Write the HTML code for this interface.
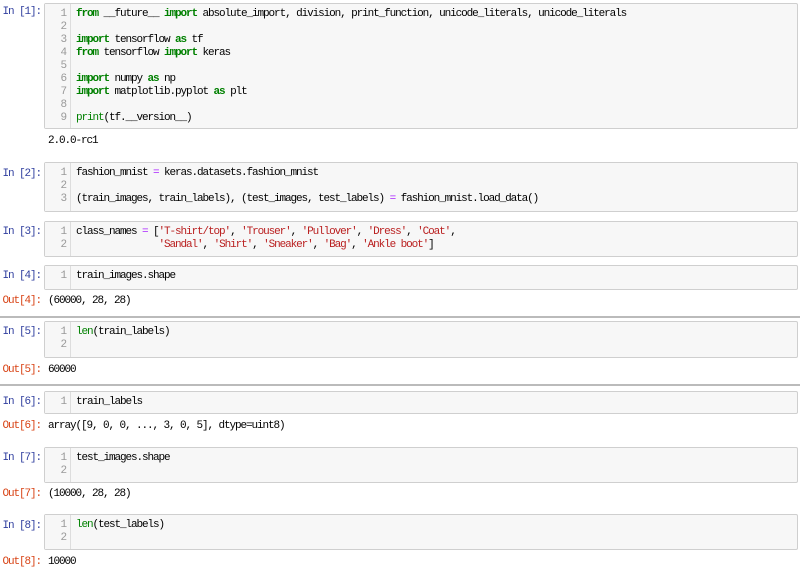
<!DOCTYPE html>
<html><head><meta charset="utf-8"><style>
body{margin:0;width:800px;height:570px;background:#fff;position:relative;overflow:hidden;font-family:"Liberation Mono","DejaVu Sans Mono",monospace;font-size:11px;letter-spacing:-1.1px;color:#000}
.p{position:absolute;left:0;width:41px;text-align:right;line-height:13px;white-space:pre}
.in{color:#303f9f}.out{color:#d84315}
.box{position:absolute;left:44px;width:752px;background:#f7f7f7;border:1px solid #cfcfcf;border-radius:2px}
.g{position:absolute;left:0;top:0;bottom:0;width:25px;border-right:1px solid #ddd;background:#f7f7f7}
.ln{position:absolute;left:0;width:21px;text-align:right;color:#999;line-height:13px;top:4px;white-space:pre}
.code{position:absolute;left:31px;top:4px;line-height:13px;white-space:pre}
.o{position:absolute;left:48px;line-height:13px;white-space:pre}
.k{color:#008000;font-weight:bold}.b{color:#008000}.s{color:#ba2121}.op{color:#aa22ff}
.hr{position:absolute;left:0;width:800px;height:2px;background:#bbb}
</style></head><body>
<div class="p in" style="top:6px">In [1]:</div>
<div class="box" style="top:3px;height:124px"><div class="g"></div><div class="ln">1
2
3
4
5
6
7
8
9</div><div class="code"><span class="k">from</span> __future__ <span class="k">import</span> absolute_import, division, print_function, unicode_literals, unicode_literals

<span class="k">import</span> tensorflow <span class="k">as</span> tf
<span class="k">from</span> tensorflow <span class="k">import</span> keras

<span class="k">import</span> numpy <span class="k">as</span> np
<span class="k">import</span> matplotlib.pyplot <span class="k">as</span> plt

<span class="b">print</span>(tf.__version__)</div></div>
<div class="o" style="top:135px">2.0.0-rc1</div>

<div class="p in" style="top:168px">In [2]:</div>
<div class="box" style="top:162px;height:48px"><div class="g"></div><div class="ln">1
2
3</div><div class="code">fashion_mnist <span class="op">=</span> keras.datasets.fashion_mnist

(train_images, train_labels), (test_images, test_labels) <span class="op">=</span> fashion_mnist.load_data()</div></div>

<div class="p in" style="top:226px">In [3]:</div>
<div class="box" style="top:221px;height:34px"><div class="g"></div><div class="ln">1
2</div><div class="code">class_names <span class="op">=</span> [<span class="s">'T-shirt/top'</span>, <span class="s">'Trouser'</span>, <span class="s">'Pullover'</span>, <span class="s">'Dress'</span>, <span class="s">'Coat'</span>,
               <span class="s">'Sandal'</span>, <span class="s">'Shirt'</span>, <span class="s">'Sneaker'</span>, <span class="s">'Bag'</span>, <span class="s">'Ankle boot'</span>]</div></div>

<div class="p in" style="top:270px">In [4]:</div>
<div class="box" style="top:265px;height:23px"><div class="g"></div><div class="ln">1</div><div class="code">train_images.shape</div></div>
<div class="p out" style="top:295px">Out[4]:</div>
<div class="o" style="top:295px">(60000, 28, 28)</div>
<div class="hr" style="top:316px"></div>

<div class="p in" style="top:326px">In [5]:</div>
<div class="box" style="top:321px;height:35px"><div class="g"></div><div class="ln">1
2</div><div class="code"><span class="b">len</span>(train_labels)</div></div>
<div class="p out" style="top:364px">Out[5]:</div>
<div class="o" style="top:364px">60000</div>
<div class="hr" style="top:384px"></div>

<div class="p in" style="top:396px">In [6]:</div>
<div class="box" style="top:391px;height:21px"><div class="g"></div><div class="ln">1</div><div class="code">train_labels</div></div>
<div class="p out" style="top:420px">Out[6]:</div>
<div class="o" style="top:420px">array([9, 0, 0, ..., 3, 0, 5], dtype=uint8)</div>

<div class="p in" style="top:452px">In [7]:</div>
<div class="box" style="top:447px;height:34px"><div class="g"></div><div class="ln">1
2</div><div class="code">test_images.shape</div></div>
<div class="p out" style="top:488px">Out[7]:</div>
<div class="o" style="top:488px">(10000, 28, 28)</div>

<div class="p in" style="top:520px">In [8]:</div>
<div class="box" style="top:514px;height:34px"><div class="g"></div><div class="ln">1
2</div><div class="code"><span class="b">len</span>(test_labels)</div></div>
<div class="p out" style="top:556px">Out[8]:</div>
<div class="o" style="top:556px">10000</div>
</body></html>
